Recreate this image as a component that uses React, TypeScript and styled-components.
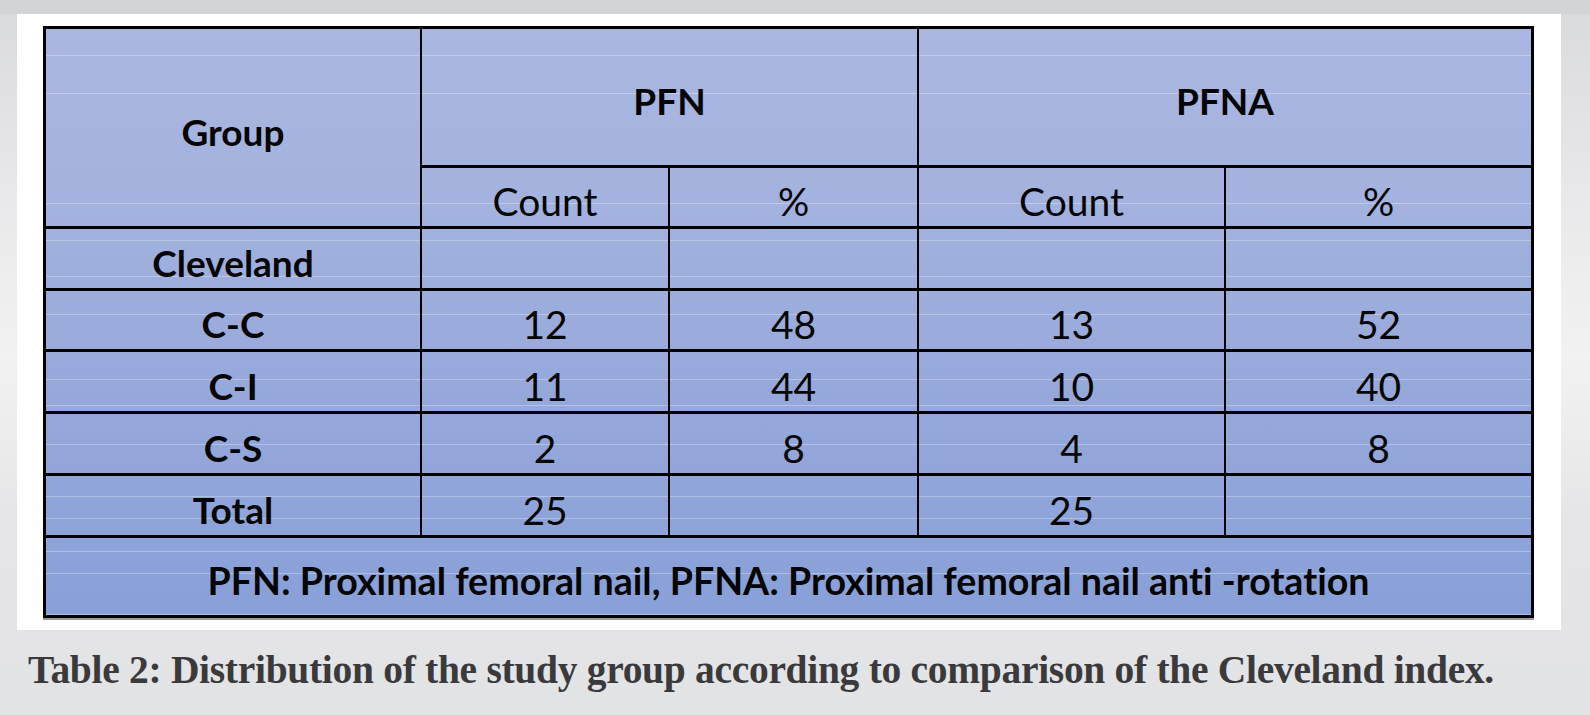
import React from "react";
import styled, { createGlobalStyle } from "styled-components";

const GlobalStyle = createGlobalStyle`
  html, body {
    margin: 0;
    padding: 0;
  }
  body {
    width: 1590px;
    height: 715px;
    overflow: hidden;
    background:
      linear-gradient(180deg, #d3d4d6 0px, #d3d4d6 14px, rgba(0,0,0,0) 14px),
      linear-gradient(180deg, #d9dadc 0%, #e9e9eb 28%, #f2f2f2 50%, #e6e6e8 72%, #e2e3e5 100%);
  }
`;

const Page = styled.div`
  display: flex;
  flex-direction: column;
  padding: 14px 0 0 17px;
`;

const Panel = styled.div`
  width: 1544px;
  height: 616px;
  box-sizing: border-box;
  background: #ffffff;
  padding: 12px 0 0 26px;
`;

const stripeYs = [27, 65, 175, 212, 248, 286, 351, 377, 416, 468, 490, 523, 545, 586];
const stripes = stripeYs
  .map(() => "linear-gradient(rgba(255,255,255,0.3), rgba(255,255,255,0.3))")
  .join(", ");
const stripePos = stripeYs.map((y) => `0 ${y}px`).join(", ");

const Table = styled.table`
  width: 1491px;
  table-layout: fixed;
  border-collapse: collapse;
  border: 3px solid #000;
  box-shadow: 0 2px 0 #9a9a9a;
  background-color: #9aabdc;
  background-image: ${stripes}, linear-gradient(180deg, #aab7e1 0%, #a3b2de 30%, #97a9db 60%, #88a0d8 100%);
  background-size: ${stripeYs.map(() => "100% 1px").join(", ")}, 100% 100%;
  background-position: ${stripePos}, 0 0;
  background-repeat: no-repeat;
  font-family: Lato, "Noto Sans", sans-serif;
  font-variant-ligatures: none;
  color: #050505;
`;

const Row = styled.tr<{ $h: number }>`
  height: ${(p) => p.$h}px;
`;

const Cell = styled.td<{ $bold?: boolean; $size?: number }>`
  border-top: 3px solid #000;
  border-bottom: 3px solid #000;
  border-left: 2px solid #000;
  border-right: 2px solid #000;
  padding: 9px 0 0 0;
  text-align: center;
  vertical-align: middle;
  font-weight: ${(p) => (p.$bold ? 700 : 400)};
  font-size: ${(p) => p.$size ?? 39}px;
  line-height: 1.1;
  white-space: nowrap;
`;

const Caption = styled.div`
  margin: 17px 0 0 11px;
  font-family: "Liberation Serif", "Times New Roman", serif;
  font-weight: 700;
  font-size: 39.5px;
  letter-spacing: -0.3px;
  color: #3a3a3c;
  white-space: nowrap;
`;

type DataRow = { label: string; vals: string[] };

const rows: DataRow[] = [
  { label: "C-C", vals: ["12", "48", "13", "52"] },
  { label: "C-I", vals: ["11", "44", "10", "40"] },
  { label: "C-S", vals: ["2", "8", "4", "8"] },
  { label: "Total", vals: ["25", "", "25", ""] },
];

export default function App() {
  return (
    <>
      <GlobalStyle />
      <Page>
        <Panel>
          <Table>
            <colgroup>
              <col style={{ width: "376.5px" }} />
              <col style={{ width: "248px" }} />
              <col style={{ width: "249px" }} />
              <col style={{ width: "307px" }} />
              <col style={{ width: "307.5px" }} />
            </colgroup>
            <tbody>
              <Row $h={139}>
                <Cell rowSpan={2} $bold $size={37}>Group</Cell>
                <Cell colSpan={2} $bold $size={37}>PFN</Cell>
                <Cell colSpan={2} $bold $size={37}>PFNA</Cell>
              </Row>
              <Row $h={61}>
                <Cell>Count</Cell>
                <Cell>%</Cell>
                <Cell>Count</Cell>
                <Cell>%</Cell>
              </Row>
              <Row $h={62}>
                <Cell $bold $size={37}>Cleveland</Cell>
                <Cell />
                <Cell />
                <Cell />
                <Cell />
              </Row>
              {rows.map((r, i) => (
                <Row key={r.label} $h={i === 0 ? 61 : 62}>
                  <Cell $bold $size={37}>{r.label}</Cell>
                  {r.vals.map((v, j) => (
                    <Cell key={j}>{v}</Cell>
                  ))}
                </Row>
              ))}
              <Row $h={80}>
                <Cell colSpan={5} $bold $size={37.6}>
                  PFN: Proximal femoral nail, PFNA: Proximal femoral nail anti -rotation
                </Cell>
              </Row>
            </tbody>
          </Table>
        </Panel>
        <Caption>
          Table 2: Distribution of the study group according to comparison of the Cleveland index.
        </Caption>
      </Page>
    </>
  );
}
